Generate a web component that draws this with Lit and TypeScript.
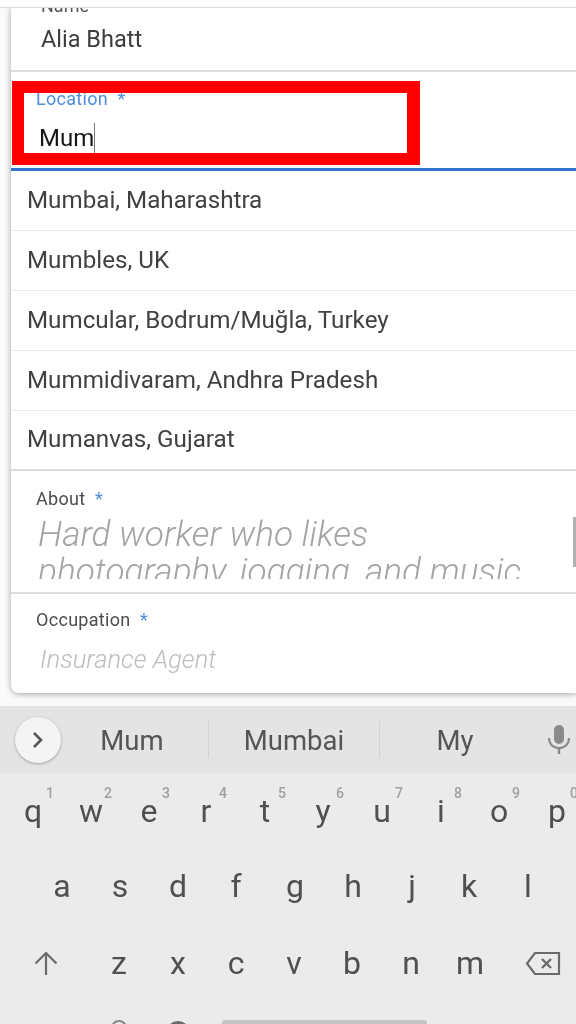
import { LitElement, html, css } from "lit";
import { customElement } from "lit/decorators.js";

const SUGGESTIONS = [
  "Mumbai, Maharashtra",
  "Mumbles, UK",
  "Mumcular, Bodrum/Muğla, Turkey",
  "Mummidivaram, Andhra Pradesh",
  "Mumanvas, Gujarat",
];

const ROW1: [string, string, number][] = [
  ["q", "1", 33], ["w", "2", 91], ["e", "3", 149], ["r", "4", 206], ["t", "5", 265],
  ["y", "6", 323], ["u", "7", 382], ["i", "8", 441], ["o", "9", 499], ["p", "0", 557],
];
const ROW2 = ["a", "s", "d", "f", "g", "h", "j", "k", "l"];
const ROW3 = ["z", "x", "c", "v", "b", "n", "m"];

@customElement("app-root")
export class AppRoot extends LitElement {
  static styles = css`
    :host {
      display: block;
      width: 576px;
      height: 1024px;
      overflow: hidden;
      background: #f4f4f4;
      font-family: Roboto, "Liberation Sans", sans-serif;
      position: relative;
    }
    .top {
      height: 706px;
      display: flex;
      flex-direction: column;
      background: #fafafa;
      overflow: hidden;
    }
    .topbar {
      height: 7px;
      background: #fff;
      border-bottom: 1px solid #dcdcdc;
      flex: none;
      position: relative;
      z-index: 2;
    }
    .card {
      margin-left: 11px;
      height: 685px;
      background: #fff;
      border-radius: 0 0 0 8px;
      box-shadow: 0 1px 6px rgba(0, 0, 0, 0.35);
      display: flex;
      flex-direction: column;
      flex: none;
    }
    .soft {
      filter: blur(0.45px);
    }
    .name {
      height: 64px;
      box-sizing: border-box;
      border-bottom: 2px solid #dcdcdc;
      flex: none;
      padding-left: 30px;
      position: relative;
    }
    .name .lbl {
      position: absolute;
      left: 30px;
      top: -13px;
      font-size: 18px;
      color: #555;
    }
    .name .val {
      padding-top: 17px;
      font-size: 23.5px;
      line-height: 28px;
      color: #3d3d3d;
    }
    .location {
      height: 99px;
      flex: none;
      box-sizing: border-box;
      border-bottom: 3px solid #2f74cf;
      position: relative;
    }
    .redbox {
      position: absolute;
      left: 1px;
      top: 9px;
      width: 408px;
      height: 84px;
      box-sizing: border-box;
      border: 12px solid #ff0000;
      border-right-width: 13px;
    }
    .location .lbl {
      position: absolute;
      left: 25px;
      top: 16px;
      font-size: 18px;
      letter-spacing: 0.3px;
      color: #4f8ddc;
      white-space: pre;
    }
    .location .val {
      position: absolute;
      left: 28px;
      top: 51px;
      font-size: 24px;
      line-height: 30px;
      color: #161616;
      border-bottom: 2px solid #9a9a9a;
      border-right: 1.5px solid #777;
      height: 30px;
    }
    .sug {
      height: 60px;
      flex: none;
      box-sizing: border-box;
      border-bottom: 1px solid #ececec;
      padding-left: 16px;
      font-size: 24.2px;
      line-height: 58px;
      color: #414141;
      white-space: nowrap;
    }
    .sug.last {
      border-bottom: 2px solid #dcdcdc;
      line-height: 57px;
    }
    .about {
      height: 123px;
      flex: none;
      box-sizing: border-box;
      border-bottom: 2px solid #dcdcdc;
      position: relative;
    }
    .about .lbl,
    .occ .lbl {
      position: absolute;
      left: 25px;
      font-size: 18px;
      letter-spacing: 0.3px;
      color: #4c4c4c;
      white-space: pre;
    }
    .about .lbl { top: 17px; }
    .occ .lbl { top: 15px; }
    .star { color: #4f8ddc; }
    .about .clip {
      position: absolute;
      left: 27px;
      top: 45px;
      width: 510px;
      height: 63px;
      overflow: hidden;
    }
    .about .text {
      font-size: 35.2px;
      line-height: 37px;
      font-style: italic;
      font-weight: 300;
      color: #a4a4a4;
      white-space: nowrap;
    }
    .about .scroll {
      position: absolute;
      right: 0;
      top: 46px;
      width: 3px;
      height: 50px;
      background: #b0b0b0;
    }
    .occ {
      flex: 1;
      position: relative;
    }
    .occ .text {
      position: absolute;
      left: 29px;
      top: 50px;
      font-size: 25.5px;
      font-style: italic;
      font-weight: 300;
      color: #bcbcbc;
      white-space: nowrap;
    }
    .kb {
      height: 318px;
      background: #ebebeb;
      position: relative;
      overflow: hidden;
      color: #4b4b4b;
      filter: blur(0.45px);
    }
    .strip {
      height: 67px;
      background: #e4e4e4;
      position: relative;
    }
    .chev {
      position: absolute;
      left: 15px;
      top: 11px;
      width: 46px;
      height: 46px;
      border-radius: 50%;
      background: #f4f4f4;
      box-shadow: 0 1px 3px rgba(0, 0, 0, 0.3);
      display: flex;
      align-items: center;
      justify-content: center;
    }
    .word {
      position: absolute;
      top: 18px;
      font-size: 27.5px;
      line-height: 34px;
      color: #555;
      transform: translateX(-50%);
    }
    .sep {
      position: absolute;
      top: 15px;
      width: 1px;
      height: 37px;
      background: #d3d3d3;
    }
    .mic {
      position: absolute;
      left: 546px;
      top: 18px;
    }
    .key {
      position: absolute;
      font-size: 32px;
      line-height: 40px;
      color: #505050;
      transform: translateX(-50%);
    }
    .hint {
      position: absolute;
      font-size: 14px;
      line-height: 16px;
      font-weight: 500;
      color: #a0a0a0;
      transform: translateX(-50%);
    }
    .ico {
      position: absolute;
    }
    .bar {
      position: absolute;
      left: 222px;
      top: 314px;
      width: 205px;
      height: 8px;
      background: #c4c4c4;
      border-radius: 3px;
    }
    .emoji {
      position: absolute;
      left: 111px;
      top: 314px;
      width: 16px;
      height: 16px;
      border: 2px solid #888;
      border-radius: 50%;
      box-sizing: border-box;
    }
    .globe {
      position: absolute;
      left: 166px;
      top: 315px;
      width: 24px;
      height: 24px;
      background: #6a6a6a;
      border-radius: 50%;
    }
  `;

  render() {
    const row2X = [62, 120, 178, 236, 295, 353, 412, 469, 528];
    const row3X = [119, 178, 236, 294, 352, 411, 470];
    return html`
      <div class="top">
        <div class="topbar"></div>
        <div class="card">
          <div class="name">
            <div class="lbl soft">Name</div>
            <div class="val soft">Alia Bhatt</div>
          </div>
          <div class="location">
            <div class="lbl soft">Location  <span class="star">*</span></div>
            <div class="val soft">Mum</div>
            <div class="redbox"></div>
          </div>
          ${SUGGESTIONS.map(
            (s, i) =>
              html`<div class="sug ${i === SUGGESTIONS.length - 1 ? "last" : ""}"><span class="soft">${s}</span></div>`
          )}
          <div class="about">
            <div class="lbl soft">About  <span class="star">*</span></div>
            <div class="clip">
              <div class="text soft">Hard worker who likes<br />photography, jogging, and music</div>
            </div>
            <div class="scroll"></div>
          </div>
          <div class="occ">
            <div class="lbl soft">Occupation  <span class="star">*</span></div>
            <div class="text soft">Insurance Agent</div>
          </div>
        </div>
      </div>
      <div class="kb">
        <div class="strip">
          <div class="chev">
            <svg width="14" height="20" viewBox="0 0 14 20" fill="none" stroke="#555" stroke-width="2.6">
              <path d="M3 3l7 7-7 7" />
            </svg>
          </div>
          <div class="word" style="left:132px">Mum</div>
          <div class="sep" style="left:208px"></div>
          <div class="word" style="left:294px">Mumbai</div>
          <div class="sep" style="left:379px"></div>
          <div class="word" style="left:455px">My</div>
          <svg class="mic" width="26" height="32" viewBox="0 0 26 32" fill="none">
            <rect x="8" y="1" width="10" height="19" rx="5" fill="#8a8a8a" />
            <path d="M3 14c0 6 4 10 10 10s10-4 10-10" stroke="#8a8a8a" stroke-width="2.2" />
            <path d="M13 24v6" stroke="#8a8a8a" stroke-width="2.4" />
          </svg>
        </div>
        ${ROW1.map(
          ([k, n, x]) => html`
            <div class="key" style="left:${x}px;top:85px">${k}</div>
            <div class="hint" style="left:${x + 17}px;top:79px">${n}</div>
          `
        )}
        ${ROW2.map(
          (k, i) => html`<div class="key" style="left:${row2X[i]}px;top:160px">${k}</div>`
        )}
        ${ROW3.map(
          (k, i) => html`<div class="key" style="left:${row3X[i]}px;top:237px">${k}</div>`
        )}
        <svg class="ico" style="left:33px;top:244px" width="26" height="26" viewBox="0 0 26 26" fill="none" stroke="#6a6a6a" stroke-width="2.2">
          <path d="M13 25V3M2.500 13.500L13 3l10.500 10.500" />
        </svg>
        <svg class="ico" style="left:525px;top:245px" width="36" height="26" viewBox="0 0 36 26" fill="none" stroke="#6a6a6a" stroke-width="2.200">
          <path d="M10 2h24v21H10L2 12.500z" />
          <path d="M17 8l9 9M26 8l-9 9" stroke-width="2.400" />
        </svg>
        <div class="emoji"></div>
        <div class="globe"></div>
        <div class="bar"></div>
      </div>
    `;
  }
}
